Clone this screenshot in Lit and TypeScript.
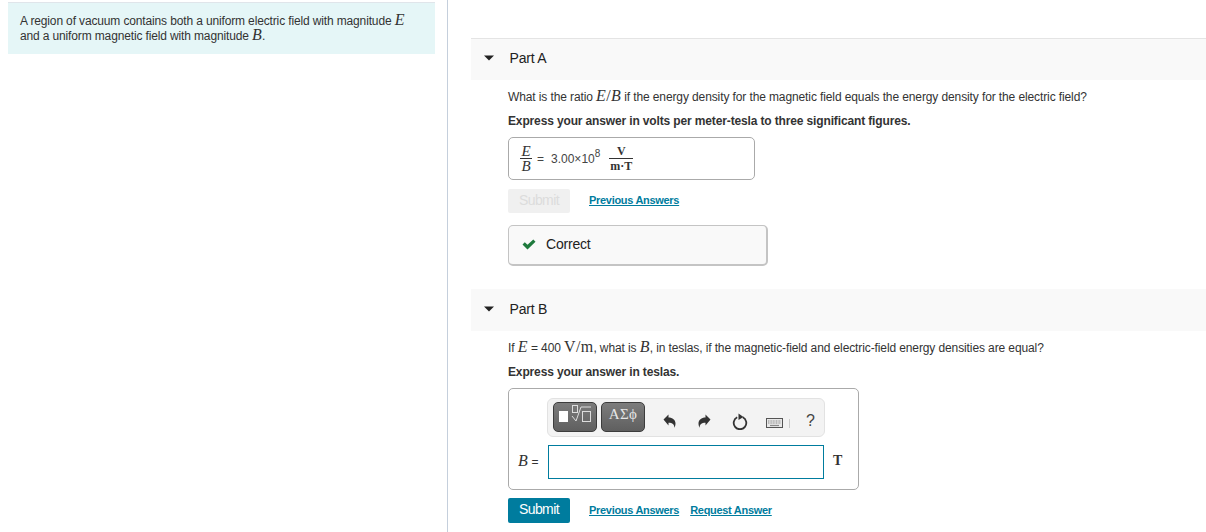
import { LitElement, html, css, svg } from "lit";
import { customElement } from "lit/decorators.js";

const caret = html`<svg class="caret" width="12" height="6" viewBox="0 0 12 6"><path d="M1 0.5h10L6 5.500z" fill="#222"/></svg>`;

@customElement("app-root")
export class AppRoot extends LitElement {
  static styles = css`
    :host { display: block; width: 1206px; height: 532px; overflow: hidden; background: #fff; color: #333;
      font-family: "Liberation Sans", Arial, sans-serif; font-size: 12px; }
    * { box-sizing: border-box; }
    .page { display: flex; height: 532px; }
    .left { width: 448px; flex: none; border-right: 1px solid #c5cfdc; padding: 2px 0 0 8px; }
    .intro { width: 427px; height: 52px; background: #e5f6f7; border-top: 1px solid #e0e5ea; padding: 10px 12px 0; line-height: 14px; letter-spacing: -0.14px; }
    .right { flex: 1; min-width: 0; padding: 38px 0 0 23px; display: flex; flex-direction: column; }
    .head { height: 42px; flex: none; background: #f9f9f9; display: flex; align-items: center; font-size: 14px; color: #222; padding: 0 0 3px 12px; gap: 14.5px; letter-spacing: -0.2px; }
    .head.a { border-top: 1px solid #e4e4e4; }
    .body { padding-left: 37px; display: flex; flex-direction: column; }
    .q { height: 14px; line-height: 14px; white-space: nowrap; margin-top: 9px; letter-spacing: -0.11px; }
    .b { height: 14px; line-height: 14px; font-weight: 700; color: #333; margin-top: 11px; white-space: nowrap; letter-spacing: -0.14px; }
    i, .m { font-family: "Liberation Serif", serif; font-size: 16px; color: #333; letter-spacing: 0.3px; }
    i { font-style: italic; }
    .ans { margin-top: 9px; width: 247px; height: 43px; border: 1px solid #aaa; border-radius: 5px; display: flex; align-items: center; padding-left: 11px; color: #444; }
    .frac { display: inline-flex; flex-direction: column; align-items: center; font-family: "Liberation Serif", serif; line-height: 14px; color: #333; }
    .frac span:first-child { border-bottom: 1px solid #333; width: 100%; text-align: center; }
    .frac.it { font-style: italic; font-size: 15px; width: 12px; }
    .frac.up { font-weight: 700; font-size: 12px; width: 24px; }
    .eq { margin: 0 7px 0 5px; }
    sup { font-size: 10px; line-height: 0; position: relative; top: -1px; vertical-align: super; }
    .val { margin-right: 9px; white-space: nowrap; }
    .row { display: flex; align-items: center; margin-top: 9px; }
    .btn { width: 62px; height: 24px; border-radius: 2px; display: flex; align-items: center; justify-content: center; padding-bottom: 2px; background: #007c9e; color: #fff; font-size: 14px; letter-spacing: -0.6px; }
    .btn.off { background: #f0f0f0; color: #dcdcdc; }
    a { color: #007c9e; font-weight: 700; font-size: 11px; text-decoration: underline; letter-spacing: -0.3px; margin-bottom: 2px; }
    .first { margin-left: 19px; }
    .second { margin-left: 11px; }
    .ok { margin-top: 12px; width: 260px; height: 41px; background: #f9f9f9; border: 1px solid #c4c4c4; border-bottom-width: 2px; border-right-width: 2px; border-radius: 5px; display: flex; align-items: center; padding: 0 0 1px 13px; gap: 10px; font-size: 14px; color: #222; letter-spacing: -0.2px; }
    .ok span { padding-bottom: 1px; }
    .partb { margin-top: 23px; }
    .editor { margin-top: 9px; width: 351px; height: 102px; border: 1px solid #aaa; border-radius: 5px; padding: 9px 0 0 38px; display: flex; flex-direction: column; }
    .tools { width: 278px; height: 39px; background: #f3f3f3; border: 1px solid #e2e2e2; border-radius: 6px; display: flex; align-items: center; padding: 0 0 1px 5px; position: relative; }
    .tb { height: 30px; border-radius: 5px; background: linear-gradient(#7c7c7c, #5f5f5f); border: 1px solid #3c3c3c; display: flex; align-items: center; justify-content: center; color: #e6e6e6; }
    .tb.t1 { width: 44px; }
    .tb.t2 { width: 44px; margin-left: 4px; font-family: "Liberation Serif", serif; font-size: 15px; letter-spacing: 0.3px; padding-bottom: 5px; }
    .ic { position: absolute; top: 15px; }
    .help { left: 258px; top: 13px; font-size: 16px; color: #444; }
    .line { display: flex; align-items: center; margin: 8px 0 0 -29px; }
    .lab { width: 30px; color: #333; font-size: 12px; white-space: nowrap; padding-bottom: 3px; }
    .box { width: 276px; height: 34px; border: 1px solid #007c9e; }
    .unit { margin-left: 9px; padding-bottom: 2px; font-family: "Liberation Serif", serif; font-weight: 700; font-size: 14px; color: #333; }
    .sub2 { margin-top: 8px; }
    .sub2 .btn { height: 25px; padding-bottom: 3px; }
    .sub2 a { margin-bottom: 1px; }
  `;

  private toolIcons() {
    return svg`
      <svg class="ic" style="left:115px" width="13" height="14" viewBox="0 0 13 14"><path d="M0.500 5.500 5.500 0.500v3c4 0 7 2.500 7 6 0 1.800-.6 3.300-1.200 4.200.2-3.200-1.800-5-5.800-5v2.800z" fill="#333"/></svg>
      <svg class="ic" style="left:150px" width="13" height="14" viewBox="0 0 13 14"><path d="M12.500 5.500 7.500 0.500v3c-4 0-7 2.500-7 6 0 1.800.6 3.300 1.200 4.200-.2-3.200 1.800-5 5.800-5v2.800z" fill="#333"/></svg>
      <svg class="ic" style="left:184px;top:14px" width="16" height="17" viewBox="0 0 16 17"><path d="M10.800 4.300a6.300 6.300 0 1 1-5.600 0" fill="none" stroke="#333" stroke-width="1.800"/><path d="M6.500 .5l5 3.500-5 3z" fill="#333"/></svg>
      <svg class="ic" style="left:218px;top:19px" width="17" height="10" viewBox="0 0 17 10"><rect x=".5" y=".5" width="16" height="9" fill="#e8e8e8" stroke="#555"/><path d="M2 3h13M2 5h13" stroke="#888" stroke-width="1.200" stroke-dasharray="1 .6"/><path d="M4 7.500h9" stroke="#888" stroke-width="1.200"/></svg>
      <svg class="ic" style="left:241px;top:20px" width="1" height="9"><rect width="1" height="9" fill="#ccc"/></svg>
    `;
  }

  render() {
    return html`<div class="page">
      <div class="left">
        <div class="intro">A region of vacuum contains both a uniform electric field with magnitude <i>E</i><br>and a uniform magnetic field with magnitude <i>B</i>.</div>
      </div>
      <div class="right">
        <div class="head a">${caret}<span>Part A</span></div>
        <div class="body">
          <div class="q">What is the ratio <i>E</i><span class="m">/</span><i>B</i> if the energy density for the magnetic field equals the energy density for the electric field?</div>
          <div class="b">Express your answer in volts per meter-tesla to three significant figures.</div>
          <div class="ans">
            <span class="frac it"><span>E</span><span>B</span></span>
            <span class="eq">=</span>
            <span class="val">3.00×10<sup>8</sup></span>
            <span class="frac up"><span>V</span><span>m·T</span></span>
          </div>
          <div class="row"><div class="btn off">Submit</div><a class="first">Previous Answers</a></div>
          <div class="ok">
            <svg width="14" height="11" viewBox="0 0 14 11"><path d="M0.500 5.500 2.800 3.200 5.500 5.700 11.300 .5 13.500 2.700 5.500 10.500z" fill="#1f7a3d"/></svg>
            <span>Correct</span>
          </div>
        </div>
        <div class="head partb">${caret}<span>Part B</span></div>
        <div class="body">
          <div class="q">If <i>E</i> = 400 <span class="m">V/m</span>, what is <i>B</i>, in teslas, if the magnetic-field and electric-field energy densities are equal?</div>
          <div class="b">Express your answer in teslas.</div>
          <div class="editor">
            <div class="tools">
              <div class="tb t1">
                <svg width="42" height="28" viewBox="0 0 42 28"><rect x="5" y="8" width="9" height="11" fill="#fff"/><rect x="18.500" y="2.500" width="5" height="7" fill="none" stroke="#ddd"/><path d="M18 13l4 5 5-14h10" fill="none" stroke="#ddd"/><rect x="28.500" y="8.500" width="8" height="10" fill="none" stroke="#ddd"/></svg>
              </div>
              <div class="tb t2">ΑΣϕ</div>
              ${this.toolIcons()}
              <span class="ic help">?</span>
            </div>
            <div class="line"><span class="lab"><i>B</i> =</span><div class="box"></div><span class="unit">T</span></div>
          </div>
          <div class="row sub2"><div class="btn">Submit</div><a class="first">Previous Answers</a><a class="second">Request Answer</a></div>
        </div>
      </div>
    </div>`;
  }
}
